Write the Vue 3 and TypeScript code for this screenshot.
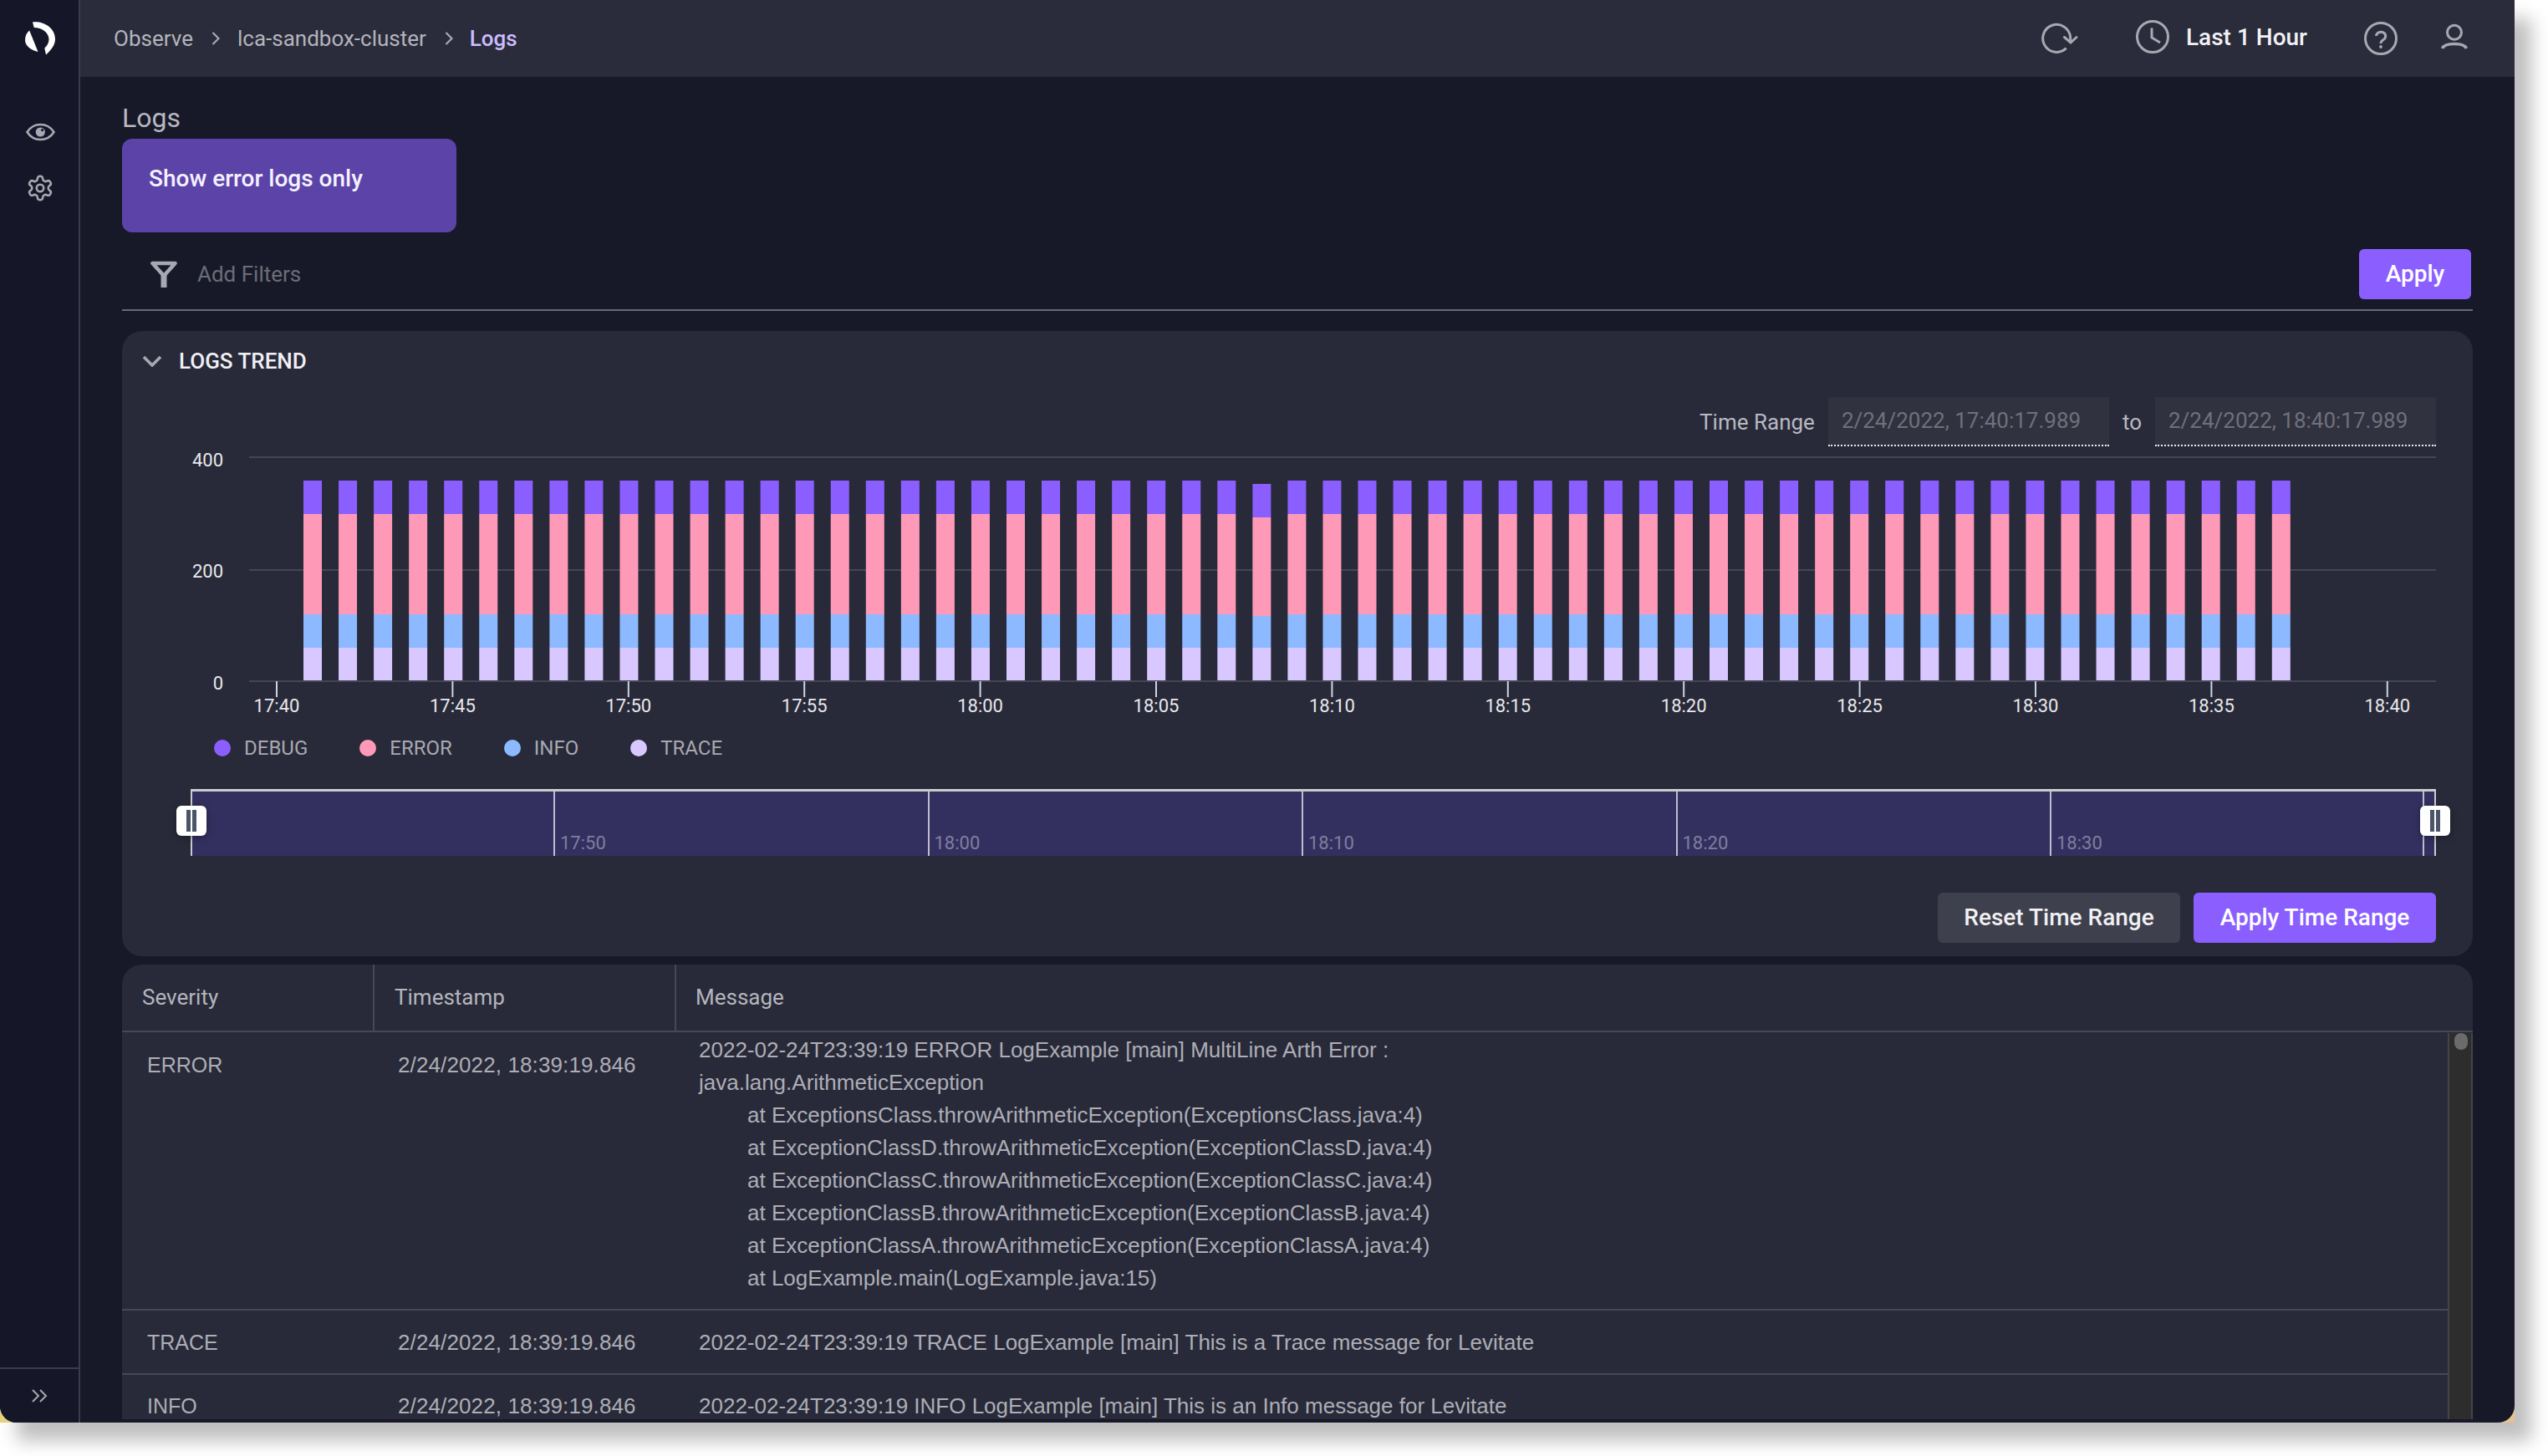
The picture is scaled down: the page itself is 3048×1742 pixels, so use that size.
<script setup lang="ts">
const barTop = (i: number) => (i === 27 ? 579 : 575)

const bars = Array.from({ length: 57 }, (_, i) => ({
  x: 363 + i * 42.05,
  top: barTop(i),
  debugEnd: i === 27 ? 619 : 615,
  errorEnd: i === 27 ? 737 : 735,
}))

const ticks = ['17:40', '17:45', '17:50', '17:55', '18:00', '18:05', '18:10', '18:15', '18:20', '18:25', '18:30', '18:35', '18:40'].map(
  (label, i) => ({ label, x: 331 + i * 210.4 }),
)

const yLabels = [
  { label: '400', y: 547, ty: 558 },
  { label: '200', y: 682, ty: 691 },
  { label: '0', y: 815, ty: 825 },
]

const legend = [
  { label: 'DEBUG', color: '#8b5fff' },
  { label: 'ERROR', color: '#fe9ab7' },
  { label: 'INFO', color: '#8cb9ff' },
  { label: 'TRACE', color: '#d9c8ff' },
]

const rangeTicks = [
  { label: '17:50', left: 432 },
  { label: '18:00', left: 879.5 },
  { label: '18:10', left: 1327 },
  { label: '18:20', left: 1774.5 },
  { label: '18:30', left: 2222 },
  { label: '', left: 2668 },
]

const errorLines = [
  'at ExceptionsClass.throwArithmeticException(ExceptionsClass.java:4)',
  'at ExceptionClassD.throwArithmeticException(ExceptionClassD.java:4)',
  'at ExceptionClassC.throwArithmeticException(ExceptionClassC.java:4)',
  'at ExceptionClassB.throwArithmeticException(ExceptionClassB.java:4)',
  'at ExceptionClassA.throwArithmeticException(ExceptionClassA.java:4)',
  'at LogExample.main(LogExample.java:15)',
]
</script>

<template>
  <div class="page">
    <div class="frame">
      <div class="app">
        <aside class="sidebar">
          <svg class="logo" viewBox="30 26 36 40" width="36" height="40">
            <path fill="#fff" d="M39 26.5C52 25 66 33 66 47C66 54 61 60 55 65.5L53.3 57.5C56.5 55 58.5 51 58.5 47C58.5 39 50 33 40.7 33Z" />
            <path fill="#fff" d="M35.2 36.5L45.5 62C36 60 30 54 30 48C30 43 32 39 35.2 36.5Z" />
          </svg>
          <svg class="eye" viewBox="0 0 36 22" width="36" height="22" fill="none">
            <path stroke="#a8a8b2" stroke-width="2.6" d="M2.5 11C7 4 12 2 18.3 2C25 2 30 4 34.5 11C30 18 25 20 18.3 20C12 20 7 18 2.5 11Z" />
            <circle cx="18.3" cy="11" r="5.6" fill="#a8a8b2" />
            <circle cx="20.6" cy="8.6" r="1.6" fill="#151728" />
          </svg>
          <svg class="gear" viewBox="0 0 24 24" width="34" height="34" fill="none" stroke="#a8a8b2" stroke-width="1.8">
            <path d="M12.22 2h-.44a2 2 0 0 0-2 2v.18a2 2 0 0 1-1 1.73l-.43.25a2 2 0 0 1-2 0l-.15-.08a2 2 0 0 0-2.73.73l-.22.38a2 2 0 0 0 .73 2.73l.15.1a2 2 0 0 1 1 1.72v.51a2 2 0 0 1-1 1.74l-.15.09a2 2 0 0 0-.73 2.73l.22.38a2 2 0 0 0 2.73.73l.15-.08a2 2 0 0 1 2 0l.43.25a2 2 0 0 1 1 1.73V20a2 2 0 0 0 2 2h.44a2 2 0 0 0 2-2v-.18a2 2 0 0 1 1-1.73l.43-.25a2 2 0 0 1 2 0l.15.08a2 2 0 0 0 2.73-.73l.22-.39a2 2 0 0 0-.73-2.73l-.15-.08a2 2 0 0 1-1-1.74v-.5a2 2 0 0 1 1-1.74l.15-.09a2 2 0 0 0 .73-2.73l-.22-.38a2 2 0 0 0-2.73-.73l-.15.08a2 2 0 0 1-2 0l-.43-.25a2 2 0 0 1-1-1.73V4a2 2 0 0 0-2-2z" />
            <circle cx="12" cy="12" r="3" />
          </svg>
          <div class="side-foot">
            <svg viewBox="0 0 20 16" width="20" height="16" fill="none" stroke="#a8a8b2" stroke-width="2">
              <path d="M2 1l7 7-7 7M11 1l7 7-7 7" />
            </svg>
          </div>
        </aside>

        <div class="main">
          <header class="topbar">
            <span class="crumb">Observe</span>
            <svg class="crumb-sep" viewBox="0 0 10 18" width="10" height="18" fill="none" stroke="#a8a8b2" stroke-width="2.2">
              <path d="M1.5 2l7 7-7 7" />
            </svg>
            <span class="crumb">lca-sandbox-cluster</span>
            <svg class="crumb-sep crumb-sep-last" viewBox="0 0 10 18" width="10" height="18" fill="none" stroke="#a8a8b2" stroke-width="2.2">
              <path d="M1.5 2l7 7-7 7" />
            </svg>
            <span class="crumb crumb-active">Logs</span>

            <div class="top-actions">
              <svg class="ic-refresh" viewBox="0 0 46 40" width="46" height="40" fill="none" stroke="#a8a8b2" stroke-width="3">
                <path d="M31.7 31.7A16.5 16.5 0 1 1 36.6 18L37 25" />
                <path stroke-linecap="round" d="M29.5 18.5L37 25L44 18.5" />
              </svg>
              <svg class="ic-clock" viewBox="0 0 42 42" width="42" height="42" fill="none" stroke="#a8a8b2" stroke-width="3">
                <circle cx="21" cy="21" r="18.5" />
                <path d="M20 10.5V22L30 28" />
              </svg>
              <span class="range-label">Last 1 Hour</span>
              <svg class="ic-help" viewBox="0 0 42 42" width="42" height="42" fill="none" stroke="#a8a8b2" stroke-width="3">
                <circle cx="21" cy="21" r="18.5" />
                <path d="M15.5 18A5.6 5 0 1 1 24 22.5C21.8 24 21 25 21 27" />
                <circle cx="21" cy="31" r="1.9" fill="#a8a8b2" stroke="none" />
              </svg>
              <svg class="ic-user" viewBox="0 0 36 36" width="36" height="36" fill="none" stroke="#a8a8b2" stroke-width="3">
                <circle cx="18" cy="13.7" r="8.5" />
                <path stroke-width="3.6" d="M3.7 33C5 29 10 27.5 18 27.5C26 27.5 31 29 32.3 33" />
              </svg>
            </div>
          </header>

          <div class="content">
            <h1 class="page-title">Logs</h1>
            <button class="error-toggle">Show error logs only</button>

            <div class="filter-row">
              <svg viewBox="0 0 32 32" width="32" height="32" fill="none" stroke="#a8a8b2">
                <path stroke-width="4.6" stroke-linejoin="round" d="M2.5 3H29.5L16 18Z" />
                <path stroke-width="7" d="M16 17V32" />
              </svg>
              <span class="filter-hint">Add Filters</span>
              <button class="btn btn-primary apply-btn">Apply</button>
            </div>

            <section class="trend">
              <div class="trend-head">
                <svg viewBox="0 0 24 14" width="24" height="14" fill="none" stroke="#a8a8b2" stroke-width="3.6">
                  <path d="M2 2l10 10L22 2" />
                </svg>
                <span class="trend-title">LOGS TREND</span>
              </div>

              <div class="time-row">
                <span class="time-label">Time Range</span>
                <div class="time-input">2/24/2022, 17:40:17.989</div>
                <span class="time-to">to</span>
                <div class="time-input">2/24/2022, 18:40:17.989</div>
              </div>

              <svg class="chart" viewBox="146 534 2812 332" width="2812" height="332">
                <rect v-for="l in yLabels" :key="l.label" x="298" :y="l.y - 1" width="2616" height="2" fill="#444653" />
                <text v-for="l in yLabels" :key="'t' + l.label" x="267" :y="l.ty" text-anchor="end" class="axis-text">{{ l.label }}</text>
                <g v-for="b in bars" :key="b.x">
                  <rect :x="b.x" :y="b.top" width="22" :height="b.debugEnd - b.top" fill="#8b5fff" />
                  <rect :x="b.x" :y="b.debugEnd" width="22" :height="b.errorEnd - b.debugEnd" fill="#fe9ab7" />
                  <rect :x="b.x" :y="b.errorEnd" width="22" :height="775 - b.errorEnd" fill="#8cb9ff" />
                  <rect :x="b.x" y="775" width="22" height="39" fill="#d9c8ff" />
                </g>
                <g v-for="t in ticks" :key="t.label">
                  <rect :x="t.x - 1" y="815" width="2" height="19" fill="#cbd5e0" />
                  <text :x="t.x" y="852" text-anchor="middle" class="axis-text">{{ t.label }}</text>
                </g>
              </svg>

              <div class="legend">
                <div v-for="item in legend" :key="item.label" class="legend-item">
                  <span class="legend-dot" :style="{ background: item.color }"></span>
                  <span>{{ item.label }}</span>
                </div>
              </div>

              <div class="range">
                <div v-for="t in rangeTicks" :key="t.left" class="range-tick" :style="{ left: t.left + 'px' }">
                  <span>{{ t.label }}</span>
                </div>
                <div class="handle handle-left"><i></i><i></i></div>
                <div class="handle handle-right"><i></i><i></i></div>
              </div>

              <div class="trend-actions">
                <button class="btn btn-muted">Reset Time Range</button>
                <button class="btn btn-primary">Apply Time Range</button>
              </div>
            </section>

            <section class="table">
              <div class="table-head">
                <div>Severity</div>
                <div>Timestamp</div>
                <div>Message</div>
              </div>
              <div class="table-body">
                <div class="rows">
                  <div class="row row-error">
                    <div class="sev">ERROR</div>
                    <div class="stamp">2/24/2022, 18:39:19.846</div>
                    <div class="msg">
                      <div>2022-02-24T23:39:19 ERROR LogExample [main] MultiLine Arth Error :</div>
                      <div>java.lang.ArithmeticException</div>
                      <div v-for="line in errorLines" :key="line" class="indent">{{ line }}</div>
                    </div>
                  </div>
                  <div class="row row-trace">
                    <div class="sev">TRACE</div>
                    <div class="stamp">2/24/2022, 18:39:19.846</div>
                    <div class="msg">2022-02-24T23:39:19 TRACE LogExample [main] This is a Trace message for Levitate</div>
                  </div>
                  <div class="row">
                    <div class="sev">INFO</div>
                    <div class="stamp">2/24/2022, 18:39:19.846</div>
                    <div class="msg">2022-02-24T23:39:19 INFO LogExample [main] This is an Info message for Levitate</div>
                  </div>
                </div>
                <div class="scrollbar"><div class="thumb"></div></div>
              </div>
            </section>
          </div>
        </div>
      </div>
    </div>
  </div>
</template>

<style>
html,
body {
  margin: 0;
  background: #fff;
}
</style>

<style scoped>
.page {
  width: 3048px;
  height: 1742px;
  overflow: hidden;
  background: #fff;
}

.frame {
  width: 3008px;
  height: 1702px;
  background: linear-gradient(90deg, #e4d27e, #e2c494);
  box-shadow: 20px 22px 20px rgba(0, 0, 0, 0.25);
  font-family: Roboto, "Liberation Sans", sans-serif;
}

.app {
  display: flex;
  height: 100%;
  border-radius: 0 0 20px 20px;
  overflow: hidden;
  background: #171929;
}

.sidebar {
  width: 96px;
  box-sizing: border-box;
  flex: none;
  display: flex;
  flex-direction: column;
  align-items: center;
  background: #151728;
  border-right: 2px solid #3a3c4c;
}

.logo {
  margin: 26px 0 0 2px;
}

.eye {
  margin: 81px 0 0 2px;
}

.gear {
  margin: 39px 0 0 2px;
}

.side-foot {
  margin-top: auto;
  width: 100%;
  height: 64px;
  border-top: 2px solid #3a3c4c;
  display: flex;
  align-items: center;
  justify-content: center;
}

.main {
  flex: 1;
  min-width: 0;
  display: flex;
  flex-direction: column;
}

.topbar {
  height: 92px;
  flex: none;
  display: flex;
  align-items: center;
  padding: 0 54px 0 40px;
  background: #2a2c3b;
  font-size: 26px;
}

.crumb {
  color: #b4b4bc;
}

.crumb-active {
  color: #cdbcff;
  font-weight: 500;
}

.crumb-sep {
  margin: 0 21px 0 22px;
}

.crumb-sep-last {
  margin-right: 20px;
}

.top-actions {
  margin-left: auto;
  display: flex;
  align-items: center;
}

.ic-clock {
  margin: 0 0 4px 68px;
}

.range-label {
  margin: 0 0 4px 19px;
  font-size: 28px;
  font-weight: 500;
  color: #f2f2f5;
}

.ic-help {
  margin-left: 67px;
}

.ic-user {
  margin: 0 0 6px 49px;
}

.content {
  flex: 1;
  min-height: 0;
  display: flex;
  flex-direction: column;
  padding: 30px 50px 4px;
}

.page-title {
  margin: 0;
  height: 44px;
  line-height: 38px;
  font-size: 32px;
  font-weight: 400;
  color: #b9b9c1;
}

.error-toggle {
  width: 400px;
  height: 112px;
  flex: none;
  border: 0;
  border-radius: 12px;
  background: #5c43a8;
  color: #f4f1ff;
  font-family: inherit;
  font-size: 28px;
  font-weight: 500;
  text-align: left;
  padding: 0 32px 18px;
}

.filter-row {
  display: flex;
  align-items: center;
  padding: 20px 2px 12px 34px;
  border-bottom: 2px solid #6a6a75;
}

.filter-hint {
  margin-left: 24px;
  font-size: 26px;
  color: #6c6d78;
}

.btn {
  height: 60px;
  border: 0;
  border-radius: 6px;
  padding: 0 0 2px;
  font-family: inherit;
  font-size: 28px;
  font-weight: 500;
  color: #fff;
}

.btn-primary {
  background: #8b5fff;
}

.btn-muted {
  background: #3f404e;
  color: #f0f0f2;
}

.apply-btn {
  margin-left: auto;
  width: 134px;
}

.trend {
  margin-top: 24px;
  flex: none;
  height: 748px;
  display: flex;
  flex-direction: column;
  background: #282a39;
  border-radius: 24px;
}

.trend-head {
  height: 72px;
  flex: none;
  display: flex;
  align-items: center;
  padding-left: 24px;
}

.trend-title {
  margin-left: 20px;
  font-size: 26px;
  font-weight: 500;
  color: #f0f0f3;
}

.time-row {
  margin-top: 7px;
  height: 59px;
  flex: none;
  display: flex;
  justify-content: flex-end;
  align-items: center;
  padding-right: 44px;
  font-size: 26px;
  color: #b9b9c1;
}

.time-label {
  margin-right: 16px;
}

.time-to {
  margin: 0 16px;
}

.time-input {
  width: 336px;
  height: 59px;
  box-sizing: border-box;
  padding: 0 16px;
  line-height: 56px;
  color: #70707c;
  background: #30323f;
  border-bottom: 2px dotted #e8e8ec;
}

.chart {
  display: block;
  flex: none;
}

.axis-text {
  font-size: 22px;
  fill: #e8e8ec;
}

.legend {
  margin-top: 16px;
  height: 26px;
  flex: none;
  display: flex;
  gap: 62px;
  padding-left: 110px;
  font-size: 24px;
  line-height: 26px;
  color: #a8a8b0;
}

.legend-item {
  display: flex;
  align-items: center;
  gap: 16px;
}

.legend-dot {
  width: 20px;
  height: 20px;
  border-radius: 50%;
}

.range {
  position: relative;
  margin: 36px 44px 0 82px;
  height: 80px;
  flex: none;
  box-sizing: border-box;
  background: #33305f;
  border: 2px solid #cccccc;
  border-top-width: 3px;
  border-bottom: 0;
}

.range-tick {
  position: absolute;
  top: 0;
  bottom: 0;
  width: 2px;
  background: #bdbdcf;
}

.range-tick span {
  position: absolute;
  left: 8px;
  bottom: 3px;
  font-size: 22px;
  color: #807e9f;
}

.handle {
  position: absolute;
  top: 17px;
  width: 36px;
  height: 36px;
  display: flex;
  justify-content: center;
  gap: 2px;
  padding-top: 5px;
  box-sizing: border-box;
  background: #fff;
  border-radius: 6px;
  box-shadow: 0 2px 8px rgba(0, 0, 0, 0.35);
}

.handle i {
  width: 5px;
  height: 26px;
  background: #4a5568;
}

.handle-left {
  left: -19px;
}

.handle-right {
  right: -19px;
}

.trend-actions {
  margin-top: 44px;
  display: flex;
  justify-content: flex-end;
  gap: 16px;
  padding-right: 44px;
}

.trend-actions .btn {
  width: 290px;
}

.table {
  margin-top: 10px;
  flex: 1;
  min-height: 0;
  display: flex;
  flex-direction: column;
  background: #282a39;
  border-radius: 24px 24px 0 0;
  overflow: hidden;
}

.table-head {
  height: 79px;
  flex: none;
  display: grid;
  grid-template-columns: 302px 361px 1fr;
  border-bottom: 2px solid #464855;
  font-size: 26px;
  line-height: 79px;
  color: #b5b5bd;
}

.table-head > div {
  padding-left: 24px;
  border-right: 2px solid #464855;
}

.table-head > div:last-child {
  border-right: 0;
  padding-left: 23px;
}

.table-body {
  flex: 1;
  min-height: 0;
  display: flex;
}

.rows {
  flex: 1;
  min-width: 0;
  font-family: "Liberation Sans", Arial, sans-serif;
  font-size: 26px;
  line-height: 39px;
  color: #aeaeb6;
}

.row {
  display: grid;
  grid-template-columns: 302px 361px 1fr;
  box-sizing: border-box;
  height: 77px;
  padding-top: 18px;
  border-bottom: 2px solid #464855;
}

.row > div:nth-child(1) {
  padding-left: 30px;
}

.row > div:nth-child(2) {
  padding-left: 28px;
}

.row > div:nth-child(3) {
  padding-left: 27px;
}

.sev {
  font-size: 25px;
}

.stamp {
  letter-spacing: 0.12px;
}

.row-error {
  height: 333px;
  padding-top: 20px;
}

.row-trace {
  padding-top: 19px;
}

.row-error .msg {
  margin-top: -18px;
}

.indent {
  margin-left: 58px;
}

.scrollbar {
  width: 30px;
  flex: none;
  box-sizing: border-box;
  margin-top: 1px;
  background: #2d2d2d;
  border-left: 2px solid #444;
  border-right: 2px solid #444;
  padding-left: 6px;
}

.thumb {
  width: 16px;
  height: 20px;
  border-radius: 8px;
  background: #6b6b6b;
}
</style>
